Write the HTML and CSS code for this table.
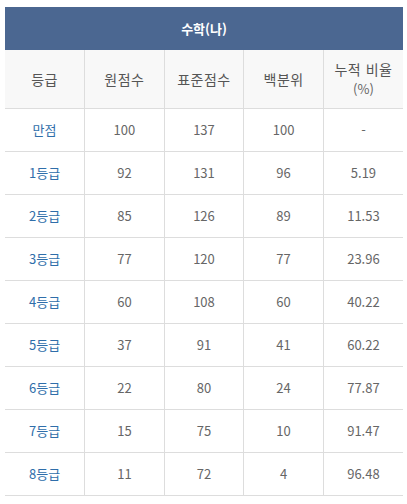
FILE: index.html
```html
<!DOCTYPE html>
<html lang="ko">
<head>
<meta charset="utf-8">
<link rel="stylesheet" href="styles.css">
</head>
<body>
<table class="grade-table">
  <thead>
    <tr><th class="title" colspan="5">수학(나)</th></tr>
    <tr class="cols">
      <th>등급</th>
      <th>원점수</th>
      <th>표준점수</th>
      <th>백분위</th>
      <th>누적 비율<br><span class="pct">(%)</span></th>
    </tr>
  </thead>
  <tbody>
    <tr><td class="grade">만점</td><td>100</td><td>137</td><td>100</td><td>-</td></tr>
    <tr><td class="grade">1등급</td><td>92</td><td>131</td><td>96</td><td>5.19</td></tr>
    <tr><td class="grade">2등급</td><td>85</td><td>126</td><td>89</td><td>11.53</td></tr>
    <tr><td class="grade">3등급</td><td>77</td><td>120</td><td>77</td><td>23.96</td></tr>
    <tr><td class="grade">4등급</td><td>60</td><td>108</td><td>60</td><td>40.22</td></tr>
    <tr><td class="grade">5등급</td><td>37</td><td>91</td><td>41</td><td>60.22</td></tr>
    <tr><td class="grade">6등급</td><td>22</td><td>80</td><td>24</td><td>77.87</td></tr>
    <tr><td class="grade">7등급</td><td>15</td><td>75</td><td>10</td><td>91.47</td></tr>
    <tr><td class="grade">8등급</td><td>11</td><td>72</td><td>4</td><td>96.48</td></tr>
  </tbody>
</table>
</body>
</html>
```
FILE: styles.css
```css
html, body {
  margin: 0;
  padding: 0;
  background: #fff;
}
body {
  padding: 7px 4px 0 5px;
  font-family: "Noto Sans CJK KR", "Noto Sans", sans-serif;
  font-size: 13px;
  color: #666;
}
.grade-table {
  width: 398px;
  border-collapse: collapse;
  table-layout: fixed;
}
.grade-table th,
.grade-table td {
  text-align: center;
  vertical-align: middle;
  padding: 0;
  border: 1px solid #ddd;
}
.grade-table th:first-child,
.grade-table td:first-child {
  border-left: none;
}
.grade-table th:last-child,
.grade-table td:last-child {
  border-right: none;
}
.title {
  height: 43px;
  background: #4b6791;
  color: #fff;
  font-weight: bold;
  font-size: 13px;
  border: none !important;
}
.cols th {
  height: 58px;
  background: #f8f8f8;
  color: #555;
  font-weight: normal;
  font-size: 14px;
  line-height: 19px;
  letter-spacing: 0.5px;
  border-top: none;
}
.cols .pct {
  font-size: 13px;
  letter-spacing: 0;
  color: #666;
}
.grade-table td {
  height: 42px;
  line-height: 18px;
}
.grade-table td.grade {
  color: #2f6eaa;
}
```
